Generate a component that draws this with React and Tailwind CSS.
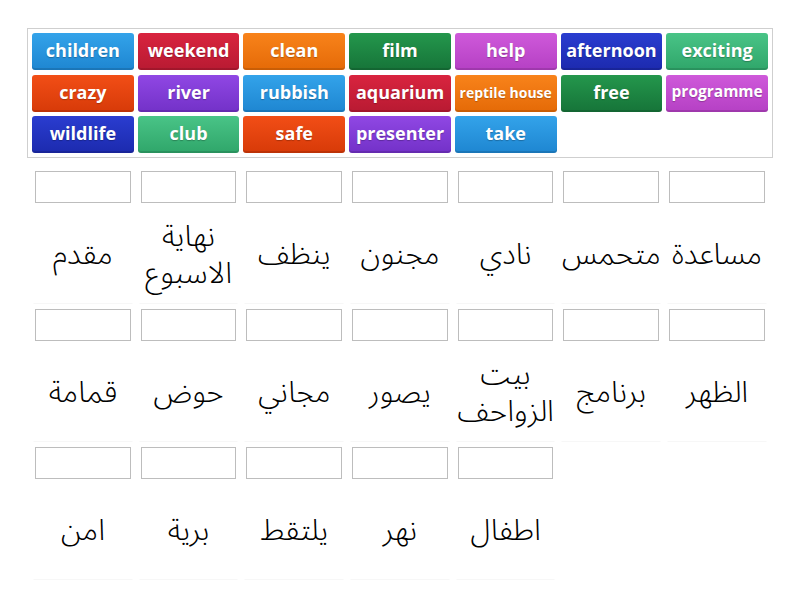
import React from "react";

const C = {
  blue: "bg-linear-to-b from-[#33a3ea] to-[#1e86d1]",
  red: "bg-linear-to-b from-[#d9243f] to-[#b81a32]",
  orange: "bg-linear-to-b from-[#f8831a] to-[#e56a06]",
  green: "bg-linear-to-b from-[#24974c] to-[#167439]",
  pink: "bg-linear-to-b from-[#cf59da] to-[#b540c4]",
  navy: "bg-linear-to-b from-[#2a3dd0] to-[#1c2aae]",
  teal: "bg-linear-to-b from-[#49c487] to-[#2fa66a]",
  red2: "bg-linear-to-b from-[#f24e16] to-[#d73a08]",
  purple: "bg-linear-to-b from-[#9047e4] to-[#7331c8]",
};

const tiles = [
  ["children", C.blue],
  ["weekend", C.red],
  ["clean", C.orange],
  ["film", C.green],
  ["help", C.pink],
  ["afternoon", C.navy],
  ["exciting", C.teal],
  ["crazy", C.red2],
  ["river", C.purple],
  ["rubbish", C.blue],
  ["aquarium", C.red],
  ["reptile house", C.orange, "text-[14px]"],
  ["free", C.green],
  ["programme", C.pink, "text-[15.5px]"],
  ["wildlife", C.navy],
  ["club", C.teal],
  ["safe", C.red2],
  ["presenter", C.purple],
  ["take", C.blue],
];

const rows = [
  ["مقدم", "نهاية الاسبوع", "ينظف", "مجنون", "نادي", "متحمس", "مساعدة"],
  ["قمامة", "حوض", "مجاني", "يصور", "بيت الزواحف", "برنامج", "الظهر"],
  ["امن", "برية", "يلتقط", "نهر", "اطفال"],
];

function Cell({ text }) {
  return (
    <div className="w-[105.7px] h-[138px] flex flex-col">
      <div className="mx-[3px] mt-[2px] flex-1 flex flex-col border border-transparent border-b-[#f7f7f7]">
        <div className="mx-[1px] mt-[2px] h-[32px] border border-[#bdbdbd] bg-white"></div>
        <div
          dir="rtl"
          className="flex-1 flex items-center justify-center text-center text-[30px] font-light leading-[37px] text-black pt-[3px]"
          style={{ fontFamily: "'Noto Sans Arabic', 'DejaVu Sans', sans-serif" }}
        >
          {text}
        </div>
      </div>
    </div>
  );
}

export default function App() {
  return (
    <div className="w-[800px] h-[600px] bg-white" style={{ fontFamily: "'Open Sans', sans-serif" }}>
      <div className="pt-[28px] pl-[27px]">
        <div className="w-[746px] border border-[#cfcfcf] p-[4px] grid grid-cols-7 gap-x-[4px] gap-y-[4.5px]">
          {tiles.map(([t, c, sz]) => (
            <div
              key={t}
              className={`${c} h-[37px] rounded-[3px] flex items-center justify-center text-white font-bold pb-[2px] ${sz || "text-[18px]"} shadow-[inset_0_-2px_0_rgba(0,0,0,0.12)] [text-shadow:0_1px_1px_rgba(0,0,0,0.25)] whitespace-nowrap`}
            >
              {t}
            </div>
          ))}
        </div>
      </div>
      <div className="pl-[30px] pt-[8px] flex flex-col">
        {rows.map((r, i) => (
          <div key={i} className="flex">
            {r.map((t) => (
              <Cell key={t} text={t} />
            ))}
          </div>
        ))}
      </div>
    </div>
  );
}
